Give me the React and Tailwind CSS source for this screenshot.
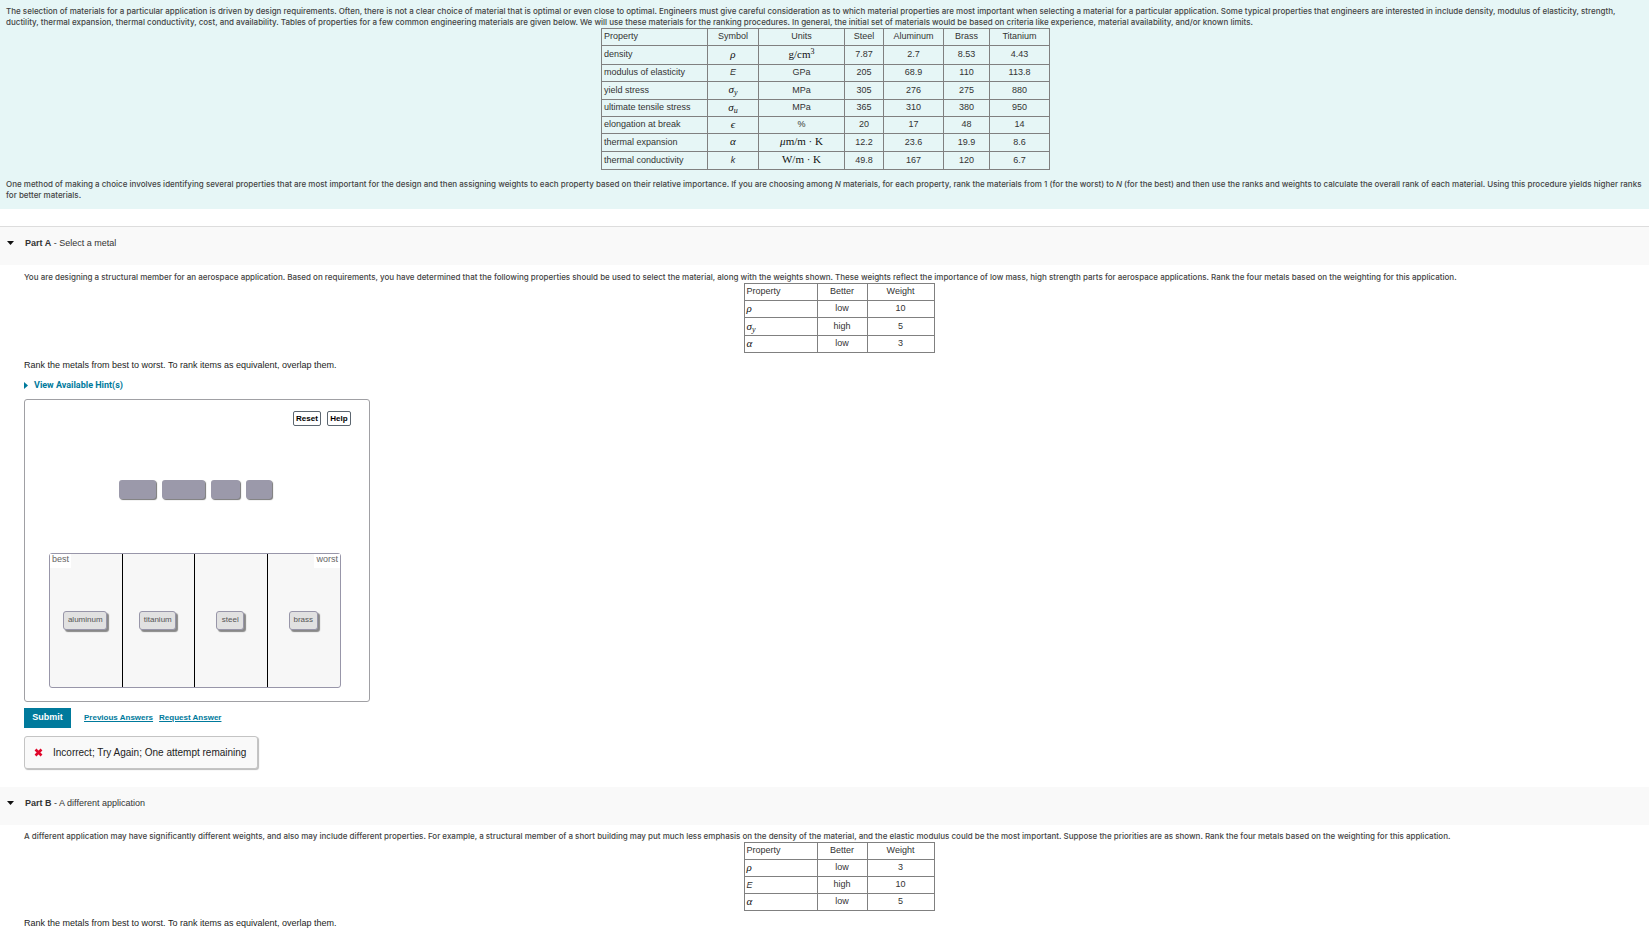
import { useState } from 'react'

const metals = [
  { property: 'density', symbol: <Sym>ρ</Sym>, units: <Units>g/cm<sup className="text-[8px]">3</sup></Units>, values: ['7.87', '2.7', '8.53', '4.43'], height: 'h-[19px]' },
  { property: 'modulus of elasticity', symbol: <i>E</i>, units: 'GPa', values: ['205', '68.9', '110', '113.8'], height: 'h-[17px]' },
  { property: 'yield stress', symbol: <Sym sub="y">σ</Sym>, units: 'MPa', values: ['305', '276', '275', '880'], height: 'h-[18px]' },
  { property: 'ultimate tensile stress', symbol: <Sym sub="u">σ</Sym>, units: 'MPa', values: ['365', '310', '380', '950'], height: 'h-[17px]' },
  { property: 'elongation at break', symbol: <Sym>ϵ</Sym>, units: '%', values: ['20', '17', '48', '14'], height: 'h-[17px]' },
  { property: 'thermal expansion', symbol: <Sym>α</Sym>, units: <Units><i>μ</i>m/m · K</Units>, values: ['12.2', '23.6', '19.9', '8.6'], height: 'h-[18px]' },
  { property: 'thermal conductivity', symbol: <i>k</i>, units: <Units>W/m · K</Units>, values: ['49.8', '167', '120', '6.7'], height: 'h-[18px]' },
]

const weightsA = [
  { property: <Sym>ρ</Sym>, better: 'low', weight: 10, height: 'h-[17px]' },
  { property: <Sym sub="y">σ</Sym>, better: 'high', weight: 5, height: 'h-[18px]' },
  { property: <Sym>α</Sym>, better: 'low', weight: 3, height: 'h-[17px]' },
]

const weightsB = [
  { property: <Sym>ρ</Sym>, better: 'low', weight: 3, height: 'h-[17px]' },
  { property: <i>E</i>, better: 'high', weight: 10, height: 'h-[17px]' },
  { property: <Sym>α</Sym>, better: 'low', weight: 5, height: 'h-[17px]' },
]

const bins = [
  { metal: 'aluminum', width: 'w-11' },
  { metal: 'titanium', width: 'w-[37px]' },
  { metal: 'steel', width: 'w-7' },
  { metal: 'brass', width: 'w-[29px]' },
]

function Sym({ children, sub }) {
  return (
    <span className="font-['Liberation_Serif',serif] text-[11px] leading-[11px] text-[#111] italic">
      {children}
      {sub && <sub className="text-[8px]">{sub}</sub>}
    </span>
  )
}

function Units({ children }) {
  return <span className="font-['Liberation_Serif',serif] text-[11px] leading-[11px] text-[#111]">{children}</span>
}

function BodyText({ children }) {
  return <p className="font-[Inter,sans-serif] text-[8px] leading-[11px] font-medium text-[#444]">{children}</p>
}

function MaterialsTable() {
  const head = 'border border-[#808080] px-0 pt-0 pb-0.5 font-normal'
  const cell = 'border border-[#808080] px-0 pt-0 pb-px'
  return (
    <table className="mx-auto mb-[9px] w-[449px] table-fixed border-collapse text-center">
      <colgroup>
        <col className="w-[106px]" />
        <col className="w-[51px]" />
        <col className="w-[86px]" />
        <col className="w-[39px]" />
        <col className="w-[60px]" />
        <col className="w-[46px]" />
        <col className="w-[60px]" />
      </colgroup>
      <thead>
        <tr className="h-[17px]">
          <th className="border border-[#808080] pt-0 pr-0 pb-0.5 pl-0.5 text-left font-normal">Property</th>
          <th className={head}>Symbol</th>
          <th className={head}>Units</th>
          <th className={head}>Steel</th>
          <th className={head}>Aluminum</th>
          <th className={head}>Brass</th>
          <th className={head}>Titanium</th>
        </tr>
      </thead>
      <tbody>
        {metals.map((row) => (
          <tr key={row.property} className={row.height}>
            <td className="border border-[#808080] pt-0 pr-0 pb-px pl-0.5 text-left">{row.property}</td>
            <td className={cell}>{row.symbol}</td>
            <td className={cell}>{row.units}</td>
            {row.values.map((value, i) => (
              <td key={i} className={cell}>{value}</td>
            ))}
          </tr>
        ))}
      </tbody>
    </table>
  )
}

function WeightsTable({ rows }) {
  return (
    <div className="pl-[5px]">
      <table className="mx-auto w-[190px] table-fixed border-collapse text-center">
        <colgroup>
          <col className="w-[73px]" />
          <col className="w-[50px]" />
          <col className="w-[67px]" />
        </colgroup>
        <thead>
          <tr className="h-[17px]">
            <th className="border border-[#808080] pt-0 pr-0 pb-0.5 pl-0.5 text-left font-normal">Property</th>
            <th className="border border-[#808080] px-0 pt-0 pb-0.5 font-normal">Better</th>
            <th className="border border-[#808080] px-0 pt-0 pb-0.5 font-normal">Weight</th>
          </tr>
        </thead>
        <tbody>
          {rows.map((row, i) => (
            <tr key={i} className={row.height}>
              <td className="border border-[#808080] py-0 pr-0 pl-0.5 text-left">{row.property}</td>
              <td className="border border-[#808080] px-0 pt-0 pb-px">{row.better}</td>
              <td className="border border-[#808080] px-0 pt-0 pb-px">{row.weight}</td>
            </tr>
          ))}
        </tbody>
      </table>
    </div>
  )
}

function PartHeader({ part, title, open, onToggle }) {
  return (
    <h2 className="h-[38px] bg-[#f9f9f9] pt-2.5">
      <button type="button" onClick={onToggle} aria-expanded={open} className="flex items-center pl-[7px] leading-3">
        <svg width="7" height="4" viewBox="0 0 7 4" className={open ? '' : '-rotate-90'}>
          <path d="M0 0h7L3.5 4z" fill="#111" />
        </svg>
        <span className="ml-[11px]">
          <span className="font-bold">{part}</span> - {title}
        </span>
      </button>
    </h2>
  )
}

function Ranking() {
  return (
    <div className="mt-2 w-[346px] rounded-[3px] border border-[#a0a0a4] px-6 pb-[13px]">
      {/* Toolbar */}
      <div className="-mr-1.5 flex justify-end gap-1.5 pt-[11px] text-[8px] leading-[9px] font-bold text-black">
        <button type="button" className="h-[15px] w-7 rounded-[2px] border border-[#5c6670] bg-white">Reset</button>
        <button type="button" className="h-[15px] w-6 rounded-[2px] border border-[#5c6670] bg-white">Help</button>
      </div>

      {/* Empty slots */}
      <div className="mt-[54px] ml-[70px] flex gap-1.5">
        <div className="h-[19px] w-[37px] rounded-[3px] bg-[#9b99aa] shadow-[1px_1px_1px_#777]"></div>
        <div className="h-[19px] w-[43px] rounded-[3px] bg-[#9b99aa] shadow-[1px_1px_1px_#777]"></div>
        <div className="h-[19px] w-[29px] rounded-[3px] bg-[#9b99aa] shadow-[1px_1px_1px_#777]"></div>
        <div className="h-[19px] w-[26px] rounded-[3px] bg-[#9b99aa] shadow-[1px_1px_1px_#777]"></div>
      </div>

      {/* Ranking bins */}
      <div className="relative mt-[54px] grid h-[135px] w-[292px] grid-cols-4 rounded-[3px] border border-[#9896a9] bg-[#f7f7f7]">
        <span className="absolute top-0 left-0 h-3.5 bg-white px-0.5 text-[9px] text-[#666]">best</span>
        <span className="absolute top-0 right-0 h-3.5 bg-white px-0.5 text-[9px] text-[#666]">worst</span>
        {bins.map(({ metal, width }) => (
          <div key={metal} className="flex items-center justify-center border-r border-black pr-px last:border-r-0">
            <button type="button" className={`${width} h-[19px] rounded-[3px] border border-[#9896a9] bg-[#e1e1e1] pb-0.5 text-[8px] leading-3 text-[#555] shadow-[2px_2px_1px_#888]`}>
              {metal}
            </button>
          </div>
        ))}
      </div>
    </div>
  )
}

export default function App() {
  const [openA, setOpenA] = useState(true)
  const [openB, setOpenB] = useState(true)

  return (
    <main className="bg-white font-['Liberation_Sans',Arial,sans-serif] text-[9px] leading-[11px] text-[#333]">
      {/* Introduction */}
      <section className="bg-[#e6f6f6] pt-[6px] pr-1 pb-2 pl-1.5">
        <BodyText>
          The selection of materials for a particular application is driven by design requirements. Often, there is not a clear choice of material that is optimal or even close to optimal. Engineers must give careful consideration as to which material properties are most important when selecting a material for a particular application. Some typical properties that engineers are interested in include density, modulus of elasticity, strength, ductility, thermal expansion, thermal conductivity, cost, and availability. Tables of properties for a few common engineering materials are given below. We will use these materials for the ranking procedures. In general, the initial set of materials would be based on criteria like experience, material availability, and/or known limits.
        </BodyText>
        <MaterialsTable />
        <BodyText>
          One method of making a choice involves identifying several properties that are most important for the design and then assigning weights to each property based on their relative importance. If you are choosing among <i>N</i> materials, for each property, rank the materials from 1 (for the worst) to <i>N</i> (for the best) and then use the ranks and weights to calculate the overall rank of each material. Using this procedure yields higher ranks for better materials.
        </BodyText>
      </section>

      {/* Part A */}
      <section className="mt-[17px] border-t border-[#ddd]">
        <PartHeader part="Part A" title="Select a metal" open={openA} onToggle={() => setOpenA(!openA)} />
        {openA && (
          <div className="pt-[7px] pl-6">
            <BodyText>
              You are designing a structural member for an aerospace application. Based on requirements, you have determined that the following properties should be used to select the material, along with the weights shown. These weights reflect the importance of low mass, high strength parts for aerospace applications. Rank the four metals based on the weighting for this application.
            </BodyText>
            <WeightsTable rows={weightsA} />
            <p className="mt-[7px] text-[#222]">Rank the metals from best to worst. To rank items as equivalent, overlap them.</p>
            <button type="button" className="mt-[9px] flex items-center gap-1.5 font-[Roboto,sans-serif] font-bold text-[#007a9c]">
              <svg width="4" height="7" viewBox="0 0 4 7">
                <path d="M0 0v7l4-3.5z" fill="currentColor" />
              </svg>
              View Available Hint(s)
            </button>

            <Ranking />

            <div className="mt-1.5 flex items-center">
              <button type="submit" className="h-5 w-[47px] bg-[#007a9c] pb-0.5 font-bold text-white">Submit</button>
              <a href="#previous" className="ml-[13px] pb-0.5 text-[8px] font-bold text-[#007a9c] underline">Previous Answers</a>
              <a href="#request" className="ml-1.5 pb-0.5 text-[8px] font-bold text-[#007a9c] underline">Request Answer</a>
            </div>

            <div role="status" className="mt-2 flex h-[33px] w-[234px] items-center gap-2.5 rounded-[3px] border border-[#c4c4c4] bg-[#f9f9f9] pl-[9px] text-[10px] text-[#222] shadow-[1px_1px_1px_#bbb]">
              <svg width="9" height="9" viewBox="0 0 9 9">
                <path d="M1.5 1.5l6 6M7.5 1.5l-6 6" stroke="#e0062a" strokeWidth="2.6" />
              </svg>
              Incorrect; Try Again; One attempt remaining
            </div>
          </div>
        )}
      </section>

      {/* Part B */}
      <section className="mt-[18px]">
        <PartHeader part="Part B" title="A different application" open={openB} onToggle={() => setOpenB(!openB)} />
        {openB && (
          <div className="pt-1.5 pl-6">
            <BodyText>
              A different application may have significantly different weights, and also may include different properties. For example, a structural member of a short building may put much less emphasis on the density of the material, and the elastic modulus could be the most important. Suppose the priorities are as shown. Rank the four metals based on the weighting for this application.
            </BodyText>
            <WeightsTable rows={weightsB} />
            <p className="mt-[7px] text-[#222]">Rank the metals from best to worst. To rank items as equivalent, overlap them.</p>
          </div>
        )}
      </section>
    </main>
  )
}
